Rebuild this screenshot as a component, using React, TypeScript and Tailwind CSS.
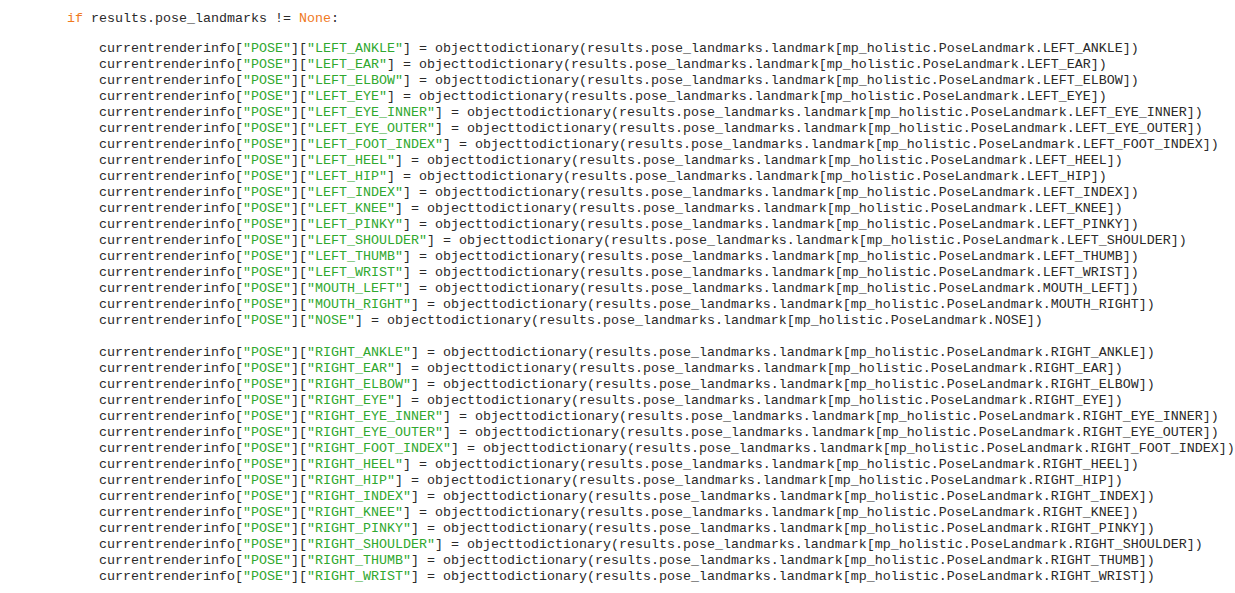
import React from "react";

const left = [
  "LEFT_ANKLE","LEFT_EAR","LEFT_ELBOW","LEFT_EYE","LEFT_EYE_INNER","LEFT_EYE_OUTER","LEFT_FOOT_INDEX","LEFT_HEEL","LEFT_HIP","LEFT_INDEX","LEFT_KNEE","LEFT_PINKY","LEFT_SHOULDER","LEFT_THUMB","LEFT_WRIST","MOUTH_LEFT","MOUTH_RIGHT","NOSE",
];
const right = [
  "RIGHT_ANKLE","RIGHT_EAR","RIGHT_ELBOW","RIGHT_EYE","RIGHT_EYE_INNER","RIGHT_EYE_OUTER","RIGHT_FOOT_INDEX","RIGHT_HEEL","RIGHT_HIP","RIGHT_INDEX","RIGHT_KNEE","RIGHT_PINKY","RIGHT_SHOULDER","RIGHT_THUMB","RIGHT_WRIST",
];

function Line({ name }: { name: string }) {
  return (
    <div className="h-[16px] whitespace-pre">
      {"currentrenderinfo["}
      <span className="text-[#2fa82f]">"POSE"</span>
      {"]["}
      <span className="text-[#2fa82f]">{`"${name}"`}</span>
      {`] = objecttodictionary(results.pose_landmarks.landmark[mp_holistic.PoseLandmark.${name}])`}
    </div>
  );
}

export default function App() {
  return (
    <div
      className="w-[1235px] h-[593px] bg-white overflow-hidden pt-[11px] pl-[67px] text-[13.33px] leading-[16px] text-[#2a2a2a]"
      style={{ fontFamily: '"Liberation Mono", "Courier New", monospace' }}
    >
      <div className="h-[16px] whitespace-pre">
        <span className="text-[#f07a1e]">if</span>
        {" results.pose_landmarks != "}
        <span className="text-[#f07a1e]">None</span>
        {":"}
      </div>
      <div className="h-[14px]" />
      <div className="pl-[32px]">
        {left.map((n) => (
          <Line key={n} name={n} />
        ))}
        <div className="h-[16px]" />
        {right.map((n) => (
          <Line key={n} name={n} />
        ))}
      </div>
    </div>
  );
}
